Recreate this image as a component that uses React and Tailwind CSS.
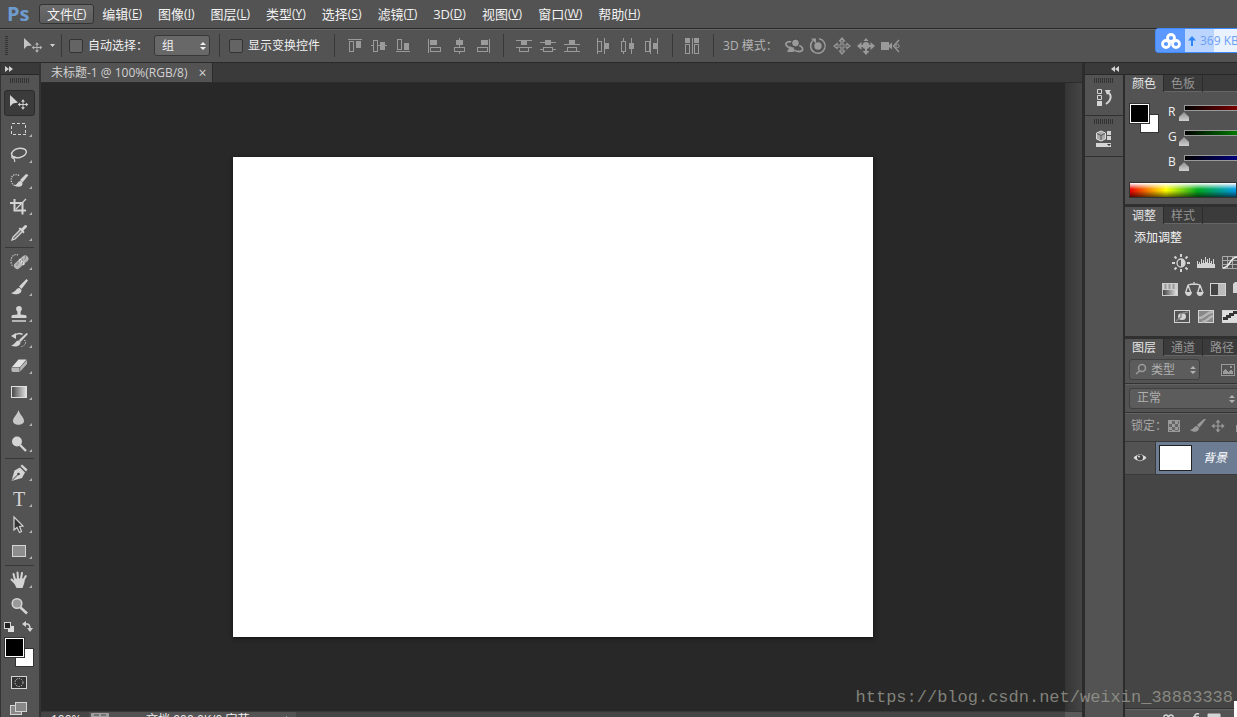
import React, { useState } from 'react';

const MENUS = [
    ['文件', 'F'], ['编辑', 'E'], ['图像', 'I'], ['图层', 'L'], ['类型', 'Y'], ['选择', 'S'],
    ['滤镜', 'T'], ['3D', 'D'], ['视图', 'V'], ['窗口', 'W'], ['帮助', 'H'],
];

const C = '#d4d4d4';
const G = '#9a9a9a';

// Every glyph is drawn on a 24px grid centred on 12,12
function Icon({ children, crisp, className = '' }) {
    return (
        <svg
            viewBox="0 0 24 24"
            className={`w-6 h-6 shrink-0 ${className}`}
            fill="none"
            stroke="none"
            shapeRendering={crisp ? 'crispEdges' : 'auto'}
            aria-hidden="true"
        >
            {children}
        </svg>
    );
}

function MoveCross({ x, y, s = 1, color = C }) {
    return (
        <g transform={`translate(${x} ${y}) scale(${s})`}>
            <path d="M-4 0H4M0 -4V4" stroke={color} strokeWidth="1" />
            <path d="M0 -5.5L2 -3H-2ZM0 5.5L2 3H-2ZM-5.5 0L-3 -2V2ZM5.5 0L3 -2V2Z" fill={color} />
        </g>
    );
}

const brushTip = (
    <>
        <path d="M21 4.500L19.500 3L12 10.500L14.500 13Z" fill={C} />
        <path d="M12.500 12C9 11.500 9.500 16 4 17C8 19.500 14.500 18.500 14.500 14Z" fill={C} />
    </>
);

const TOOLS = [
    { name: '移动工具', plain: true, art: <><path d="M3 4V15.500L6 12.500L11 11.500Z" fill={C} /><MoveCross x={16} y={13.5} s={0.95} /></> },
    { name: '矩形选框工具', crisp: true, art: <path d="M4.500 6.500H18.500V17.500H4.500Z" stroke={C} strokeDasharray="3 2" /> },
    {
        name: '套索工具',
        art: (
            <>
                <ellipse cx="12" cy="10" rx="7.500" ry="4.500" stroke={C} strokeWidth="1.500" transform="rotate(-12 12 10)" />
                <path d="M6 12.500C3.500 13.500 5 16 7 15C9 14 6.500 12.500 6.500 14.500C6.500 16.500 8.500 16 7.500 19" stroke={C} strokeWidth="1.200" />
            </>
        ),
    },
    {
        name: '快速选择工具',
        art: (
            <>
                <path d="M12 6.500C7 3.500 3 8 4.500 13C5.500 16 8 17 9.500 16.500" stroke={C} strokeWidth="1.300" strokeDasharray="1.200 1.200" />
                <path d="M21.500 6L19 5L13 11L15.500 13.500Z" fill={C} />
                <path d="M14 12C10.500 11.500 11 15.500 7 16.500C11 19 16 18 15.500 14Z" fill={C} />
            </>
        ),
    },
    { name: '裁剪工具', art: <><path d="M7.500 4V15.500H19M3 8H15.500V19.500" stroke={C} strokeWidth="2" /><path d="M9 14L19 4" stroke={C} strokeWidth="1.200" /></> },
    {
        name: '吸管工具',
        art: (
            <>
                <path d="M13 9L6 16L5 19L8 18L15 11" stroke={C} strokeWidth="1.300" fill="#777" />
                <path d="M11.500 7.500L13 6.500L14.500 7.500L17.500 4.500C19 3 21 5 19.500 6.500L16.500 9.500L17.500 11L16.500 12.500Z" fill={C} />
            </>
        ),
    },
    'sep',
    {
        name: '污点修复画笔工具',
        art: (
            <>
                <path d="M11 5C7 3.500 3.500 7 4 12C4.300 14 5 15.500 6 16.500" stroke={C} strokeWidth="1.200" strokeDasharray="1.200 1.200" />
                <rect x="5.500" y="9" width="17" height="6.500" rx="3" fill="#b8b8b8" transform="rotate(-42 14 12)" />
                <path d="M11.500 10L16.500 15.500L18 14L13 8.500Z" fill="#dcdcdc" />
                <path d="M13 11h1m1 2h1m-1-3h1M18 7h1M9.500 15h1m0-2h1m6-4h1" stroke="#555" />
            </>
        ),
    },
    { name: '画笔工具', art: brushTip },
    {
        name: '仿制图章工具',
        art: (
            <>
                <path d="M12 4C8.500 4 8.500 8 10.300 9.500L10.500 12.500Q5 12.500 4.500 14V16H19.500V14Q19 12.500 13.500 12.500L13.700 9.500C15.500 8 15.500 4 12 4Z" fill={C} />
                <path d="M5 19H19" stroke={C} strokeWidth="1.500" />
            </>
        ),
    },
    {
        name: '历史记录画笔工具',
        art: (
            <>
                <path d="M21 6L19.500 5L12 12L13.500 14Z" fill={C} />
                <path d="M12 12.500C8.500 12 9 16 4 17.500C8 19.500 13.500 18.500 13.500 14Z" fill={C} />
                <path d="M7 8C10 5 13 5 15.500 6.500" stroke={C} strokeWidth="1.600" />
                <path d="M9 5L4 8L9 11Z" fill={C} />
                <path d="M17.500 12C20 15 17.500 18 14.500 18.500" stroke={C} strokeDasharray="1.300 1.300" />
            </>
        ),
    },
    {
        name: '橡皮擦工具',
        art: (
            <>
                <path d="M11.500 5.500H19.500L13 13H5Z" fill="#e2e2e2" />
                <path d="M4.500 13.500H12.500V18H6Q4 18 4.500 13.500ZM13.200 13.500L20 6V10L13.200 17.500Z" fill="#b5b5b5" />
            </>
        ),
    },
    {
        name: '渐变工具',
        crisp: true,
        art: (
            <>
                <defs><linearGradient id="toolGrad"><stop stopColor="#444" /><stop offset="1" stopColor="#e4e4e4" /></linearGradient></defs>
                <rect x="4.500" y="6.500" width="15" height="11" fill="url(#toolGrad)" stroke="#e0e0e0" />
            </>
        ),
    },
    { name: '模糊工具', art: <path d="M11.500 4C10.500 8.500 6 11 6 15C6 20 17 20 17 15C17 11 12.500 8.500 11.500 4Z" fill="#c8c8c8" /> },
    { name: '减淡工具', art: <><circle cx="10" cy="9.500" r="5" fill={C} /><path d="M13 13L19 19" stroke={C} strokeWidth="2.400" /></> },
    'sep',
    {
        name: '钢笔工具',
        art: (
            <>
                <path d="M15 3.500L20.500 8.500L19 10.500L13.500 5Z" fill={C} />
                <path d="M13 6.500L18 11.500L15 17L4.500 20L7.500 9.500Z" fill={C} />
                <path d="M5 19.500L11 13.500" stroke="#444" />
                <circle cx="11.500" cy="13" r="1.300" fill="#444" />
            </>
        ),
    },
    { name: '横排文字工具', text: 'T' },
    { name: '路径选择工具', art: <path d="M7 4V17L10 14.500L12.500 19.500L14.500 18.500L12.500 13.500L16 13Z" fill="#333" stroke={C} strokeWidth="1.200" /> },
    { name: '矩形工具', crisp: true, art: <rect x="5.500" y="6.500" width="13" height="11" fill="#8d8d8d" stroke={C} /> },
    'sep',
    {
        name: '抓手工具',
        art: (
            <>
                <path d="M8 12L6.500 6M11 11L10.500 4.500M14 11L15 5M16.500 12L18.800 8M9 16L4.500 11.500" stroke={C} strokeWidth="2" strokeLinecap="round" />
                <path d="M7.500 10.500H17.500C18 15 16.500 17 15.500 20H9.500C8.500 17.500 6.500 15.500 7.500 10.500Z" fill={C} />
            </>
        ),
    },
    {
        name: '缩放工具',
        plain: true,
        art: <><circle cx="10" cy="9.500" r="4.800" fill="#999" stroke={C} strokeWidth="1.500" /><path d="M13.500 13.500L20 19.500" stroke={C} strokeWidth="2.500" /></>,
    },
];

// Align / distribute glyphs: an outlined box, a filled box and guide lines
const box = (x, y, w, h) => <rect x={x + 0.5} y={y + 0.5} width={w - 1} height={h - 1} stroke={G} />;
const fill = (x, y, w, h) => <rect x={x} y={y} width={w} height={h} fill={G} />;

const ALIGN_V = [
    ['顶对齐', <>{fill(5, 5, 14, 1)}{box(6, 7, 5, 11)}{fill(13, 7, 5, 7)}</>],
    ['垂直居中对齐', <>{fill(4, 11, 16, 1)}<rect x="6" y="6" width="5" height="12" fill="#535353" />{box(6, 6, 5, 12)}{fill(13, 8, 5, 8)}</>],
    ['底对齐', <>{box(6, 5, 5, 11)}{fill(13, 9, 5, 7)}{fill(5, 17, 14, 1)}</>],
];
const ALIGN_H = [
    ['左对齐', <>{fill(5, 5, 1, 14)}{fill(7, 6, 7, 5)}{box(7, 13, 11, 5)}</>],
    ['水平居中对齐', <>{fill(12, 4, 1, 16)}{fill(9, 6, 7, 5)}<rect x="7" y="13" width="11" height="5" fill="#535353" />{box(7, 13, 11, 5)}</>],
    ['右对齐', <>{fill(18, 5, 1, 14)}{fill(10, 6, 7, 5)}{box(6, 13, 11, 5)}</>],
];
const DIST_V = [
    ['按顶分布', <>{fill(4, 6, 16, 1)}{fill(9, 7, 6, 4)}{fill(4, 13, 16, 1)}{box(7, 13, 10, 5)}</>],
    ['垂直居中分布', <>{fill(4, 8, 16, 1)}{fill(9, 6, 6, 5)}{fill(4, 15, 16, 1)}<rect x="7" y="13" width="10" height="5" fill="#535353" />{box(7, 13, 10, 5)}</>],
    ['按底分布', <>{fill(9, 6, 6, 4)}{fill(4, 10, 16, 1)}{box(7, 13, 10, 5)}{fill(4, 17, 16, 1)}</>],
];
const DIST_H = [
    ['按左分布', <>{fill(5, 4, 1, 16)}{box(5, 7, 5, 11)}{fill(12, 4, 1, 16)}{fill(13, 9, 4, 6)}</>],
    ['水平居中分布', <>{fill(7, 4, 1, 16)}<rect x="5" y="7" width="5" height="11" fill="#535353" />{box(5, 7, 5, 11)}{fill(15, 4, 1, 16)}{fill(13, 9, 5, 6)}</>],
    ['按右分布', <>{box(5, 7, 5, 11)}{fill(10, 4, 1, 16)}{fill(13, 9, 4, 6)}{fill(17, 4, 1, 16)}</>],
];
const AUTO = [
    ['自动对齐图层', <>{fill(5, 4, 5, 5)}{fill(14, 4, 5, 5)}{box(5, 10, 5, 10)}{box(14, 10, 5, 10)}{fill(12, 4, 1, 16)}</>],
];
const MODES_3D = [
    ['旋转 3D 对象', (
        <>
            <path d="M10 8C4 6.500 2 10.500 6 13L12 14.500M16 11C22 13 22 17.500 17 17.500C14 17.500 12 16 9 15.500" stroke={G} strokeWidth="1.800" />
            <circle cx="13.500" cy="9" r="4" fill={G} stroke="#444" />
            <path d="M5 18L8 12L12 18Z" fill={G} />
        </>
    )],
    ['滚动 3D 对象', <><circle cx="12" cy="12" r="3.700" fill={G} /><path d="M7 6.500A7.300 7.300 0 1 0 13 4.700" stroke={G} strokeWidth="1.500" /><path d="M5 4.500H10V9.500Z" fill={G} /></>],
    ['拖动 3D 对象', <path d="M12 4L14.500 7H13V11H17V9.500L20 12L17 14.500V13H13V17H14.500L12 20L9.500 17H11V13H7V14.500L4 12L7 9.500V11H11V7H9.500Z" stroke={G} strokeWidth="1.200" />],
    ['滑动 3D 对象', <><circle cx="12" cy="11.500" r="3.500" fill={G} /><path d="M12 21L8.500 17H15.500ZM3 12L7.500 8V16ZM21 12L16.500 8V16ZM12 4L9.500 7H14.500Z" fill={G} /><path d="M5 12H19M12 12V18" stroke={G} strokeWidth="2" /></>],
    ['缩放 3D 对象', <><path d="M3 8H11V16H3ZM11 11L14 8.500V15.500L11 13Z" fill={G} /><path d="M21 6L15.500 12L21 18" stroke={G} strokeWidth="1.300" /><circle cx="19.500" cy="12" r="1.700" stroke={G} /></>],
];

function OptionGroup({ items, crisp = true }) {
    return (
        <div className="flex">
            {items.map(([label, art]) => (
                <button key={label} type="button" aria-label={label} className="flex">
                    <Icon crisp={crisp}>{art}</Icon>
                </button>
            ))}
        </div>
    );
}

function Divider() {
    return <div className="w-px h-[23px] shrink-0 bg-[#383838]" />;
}

function Grip({ vertical }) {
    return vertical ? (
        <div className="w-[3px] h-5 shrink-0 bg-[repeating-linear-gradient(#333_0_1px,#535353_1px_2px)]" />
    ) : (
        <div className="w-5 h-[5px] shrink-0 bg-[repeating-linear-gradient(90deg,#333_0_1px,#535353_1px_2px)]" />
    );
}

function Arrows({ className = '' }) {
    return (
        <svg viewBox="0 0 6 10" className={`absolute w-1.5 h-2.5 pointer-events-none ${className}`} fill="currentColor" aria-hidden="true">
            <path d="M3 1L6 4H0ZM3 9L6 6H0Z" />
        </svg>
    );
}

function Check({ children }) {
    return (
        <label className="flex items-center gap-[5px] whitespace-nowrap">
            <input type="checkbox" className="appearance-none w-3.5 h-3.5 rounded-[2px] border border-[#333] bg-[#646464] checked:bg-[#aaa]" />
            {children}
        </label>
    );
}

function MenuBar() {
    return (
        <header className="flex items-center h-7 shrink-0 pl-[7px]">
            <span className="w-8 text-xl leading-6 font-bold text-[#6f9ccf]">Ps</span>
            <nav className="flex">
                {MENUS.map(([name, key], i) => (
                    <button
                        key={key}
                        type="button"
                        className={`h-5 px-[7px] flex items-center mb-px text-[13px] leading-4 text-[#f2f2f2] whitespace-nowrap rounded-[3px] border ${
                            i === 0 ? 'border-[#333] bg-linear-to-b from-[#6c6c6c] to-[#5c5c5c]' : 'border-transparent'
                        }`}
                    >
                        {name}
                        <span className="text-xs">(<u>{key}</u>)</span>
                    </button>
                ))}
            </nav>
        </header>
    );
}

function OptionsBar() {
    return (
        <div className="flex items-center h-[35px] shrink-0 pl-[5px] border-y border-[#2a2a2a] shadow-[inset_0_1px_0_#666] text-xs text-[#f0f0f0]">
            <Grip vertical />
            <button type="button" aria-label="移动工具预设" className="flex items-center ml-3 mr-1.5">
                <Icon>
                    <path d="M4 4V15L7 12L12 11.500Z" fill="#c4c4c4" />
                    <MoveCross x={17} y={13.5} s={0.95} color="#b8b8b8" />
                </Icon>
                <svg viewBox="0 0 5 3" className="w-[5px] h-[3px] ml-1.5" fill={C} aria-hidden="true"><path d="M0 0H5L2.500 3Z" /></svg>
            </button>
            <Divider />
            <div className="flex items-center pl-[7px] pr-[9px] gap-2">
                <Check><span className="w-[58px]">自动选择：</span></Check>
                <div className="relative">
                    <select aria-label="自动选择" className="appearance-none w-14 h-[21px] pl-[7px] text-xs rounded-[3px] border border-[#383838] bg-[#686868]">
                        <option>组</option>
                        <option>图层</option>
                    </select>
                    <Arrows className="right-1 top-1.5" />
                </div>
            </div>
            <Divider />
            <div className="pl-[9px] pr-3.5"><Check>显示变换控件</Check></div>
            <Divider />
            <div className="flex gap-2 px-2">
                <OptionGroup items={ALIGN_V} />
                <OptionGroup items={ALIGN_H} />
            </div>
            <Divider />
            <div className="flex gap-2 px-2">
                <OptionGroup items={DIST_V} />
                <OptionGroup items={DIST_H} />
            </div>
            <Divider />
            <div className="pl-[7px] pr-[9px]"><OptionGroup items={AUTO} /></div>
            <Divider />
            <span className="pl-[9px] w-[68px] whitespace-nowrap text-[#b4b4b4]">3D 模式：</span>
            <OptionGroup items={MODES_3D} crisp={false} />
        </div>
    );
}

function Toolbar() {
    const [active, setActive] = useState('移动工具');
    return (
        <aside className="w-[41px] shrink-0 flex flex-col border-l border-r-2 border-[#333] bg-[#535353]">
            <div className="h-3 shrink-0 pl-1 flex items-center bg-[#3a3a3a] border-b border-[#282828]">
                <svg viewBox="0 0 8 6" className="w-2 h-1.5" fill={C} aria-hidden="true"><path d="M0 0L4 3L0 6ZM4 0L8 3L4 6Z" /></svg>
            </div>
            <div className="flex justify-center pt-[3px] pb-[7px]"><Grip /></div>
            <div className="flex flex-col items-center pr-0.5">
                {TOOLS.map((tool, i) => tool === 'sep' ? (
                    <div key={i} className="w-[29px] h-px my-px shrink-0 bg-[#383838]" />
                ) : (
                    <button
                        key={tool.name}
                        type="button"
                        aria-label={tool.name}
                        onClick={() => setActive(tool.name)}
                        className={`relative w-[31px] h-[26px] shrink-0 flex items-center justify-center rounded-[3px] border ${
                            active === tool.name ? 'border-[#2c2c2c] bg-[#3b3b3b]' : 'border-transparent'
                        }`}
                    >
                        {tool.text
                            ? <span className="font-['Liberation_Serif',serif] text-xl leading-6 text-[#d4d4d4]">{tool.text}</span>
                            : <Icon crisp={tool.crisp}>{tool.art}</Icon>}
                        {!tool.plain && (
                            <svg viewBox="0 0 3 3" className="absolute right-0.5 bottom-1 w-[3px] h-[3px]" fill="#b4b4b4" aria-hidden="true"><path d="M3 0V3H0Z" /></svg>
                        )}
                    </button>
                ))}
            </div>
            <div className="flex justify-between pl-[3px] pr-1.5 pt-0.5">
                <button type="button" aria-label="默认前景色和背景色">
                    <svg viewBox="0 0 10 10" className="w-2.5 h-2.5" shapeRendering="crispEdges" aria-hidden="true">
                        <path d="M4 4H10V10H4Z" fill="#ddd" /><path d="M.5.5H6.500V6.500H.5Z" fill="#222" stroke={C} />
                    </svg>
                </button>
                <button type="button" aria-label="切换前景色和背景色">
                    <svg viewBox="0 0 11 11" className="w-[11px] h-[11px]" fill="none" aria-hidden="true">
                        <path d="M3 3H5Q8 3 8 8" stroke={C} strokeWidth="1.500" /><path d="M0 3L4 0V6ZM8 11L5 7H11Z" fill={C} />
                    </svg>
                </button>
            </div>
            <div className="flex pl-1 pt-1.5">
                <Swatches />
            </div>
            <button type="button" aria-label="以快速蒙版模式编辑" className="self-center mr-0.5 mt-1 shrink-0">
                <Icon>
                    <rect x="4.500" y="5.500" width="15" height="12" fill="#333" stroke={C} />
                    <circle cx="12" cy="11.500" r="4" stroke={C} strokeDasharray="1.300 1.300" />
                </Icon>
            </button>
            <button type="button" aria-label="更改屏幕模式" className="self-center mr-0.5 mt-0.5 shrink-0">
                <Icon crisp>
                    <rect x="3.500" y="8.500" width="11" height="9" fill="#888" stroke={C} />
                    <rect x="8.500" y="5.500" width="11" height="9" fill="#888" stroke={C} />
                </Icon>
            </button>
        </aside>
    );
}

function Swatches() {
    return (
        <div className="grid grid-cols-[10px_9px_10px] grid-rows-[10px_9px_10px] w-[29px] shrink-0">
            <button type="button" aria-label="背景色" className="col-start-2 col-span-2 row-start-2 row-span-2 bg-white border border-[#333]" />
            <button type="button" aria-label="前景色" className="col-start-1 col-span-2 row-start-1 row-span-2 bg-black border border-white outline outline-[#333]" />
        </div>
    );
}

function Workspace() {
    return (
        <main className="flex-1 min-w-0 flex flex-col bg-[#282828]">
            <div className="h-5 shrink-0 flex bg-[#3a3a3a] border-b border-[#2c2c2c]">
                <div className="flex items-center pl-2.5 pr-1.5 gap-[11px] text-xs text-[#d2d2d2] bg-[#535353] border-r border-[#2c2c2c] whitespace-nowrap">
                    <span>未标题-1 @ 100%(RGB/8)</span>
                    <button type="button" aria-label="关闭" className="text-sm leading-4">×</button>
                </div>
            </div>
            <div className="flex-1 min-h-0 flex">
                <div className="flex-1 flex items-center justify-center">
                    <div className="w-[640px] h-[480px] shrink-0 bg-white shadow-[0_1px_4px_#111]" />
                </div>
                <div className="w-[17px] shrink-0 bg-linear-to-r from-[#353535] to-[#454545]" />
            </div>
            {/* sits half below the window edge */}
            <footer className="h-[18px] -mb-3 shrink-0 flex bg-[#454545] border-t border-[#383838] text-xs leading-4 text-[#f0f0f0] whitespace-nowrap">
                <span className="w-12 pl-2.5">100%</span>
                <div className="w-[207px] flex pl-0.5 pr-1 bg-[#535353]">
                    <svg viewBox="0 0 18 12" className="w-[18px] h-3 mt-px" aria-hidden="true"><rect width="18" height="12" rx="1" fill="#a0a0a0" /><path d="M3 2H8M10 2H15" stroke="#444" /></svg>
                    <span className="flex-1 pl-[37px]">文档:900.0K/0 字节</span>
                    <svg viewBox="0 0 6 10" className="w-1.5 h-2.5 mt-1" fill={C} aria-hidden="true"><path d="M0 0L6 5L0 10Z" /></svg>
                </div>
                <span className="flex-1" />
                <span className="w-[17px] bg-[#5a5a5a]" />
            </footer>
        </main>
    );
}

function Dock() {
    return (
        <div className="w-10 shrink-0 flex flex-col border-r-2 border-[#2c2c2c]">
            <div className="h-[41px] flex flex-col items-center pt-[3px] border-b border-[#303030]">
                <Grip />
                <button type="button" aria-label="历史记录" className="mt-[3px]">
                    <Icon className="ml-0.5">
                        <path d="M4.500 3.500H8.500V7.500H4.500ZM4.500 9.500H8.500V13.500H4.500Z" stroke={C} />
                        <path d="M4 15H9V20H4ZM12 4H18L14 9Z" fill={C} />
                        <path d="M14 6C19 8 19 14 13 18" stroke={C} strokeWidth="2" />
                    </Icon>
                </button>
            </div>
            <div className="h-[41px] flex flex-col items-center pt-[3px] border-b border-[#303030]">
                <Grip />
                <button type="button" aria-label="属性" className="mt-[3px]">
                    <Icon className="ml-0.5">
                        <path d="M8 4L12.500 6V12L8 14L3.500 12V6Z" fill="#aaa" stroke="#ddd" />
                        <path d="M4 6.500L8 8.500L12 6.500M8 8.500V13" stroke="#555" />
                        <path d="M14 4H18V8H14ZM14 9H18V13H14ZM3 16H18V20H3Z" fill={C} />
                        <path d="M14 17H18L16 19Z" fill="#333" />
                    </Icon>
                </button>
            </div>
        </div>
    );
}

function Tabs({ names }) {
    return (
        <div role="tablist" className="h-[17px] shrink-0 flex bg-[#3b3b3b] text-xs leading-4 whitespace-nowrap">
            {names.map((name, i) => (
                <button
                    key={name}
                    type="button"
                    role="tab"
                    aria-selected={i === 0}
                    className={`shrink-0 w-[39px] border-r border-[#2c2c2c] ${
                        i === 0 ? 'bg-[#535353] text-[#e6e6e6]' : 'text-[#949494] shadow-[inset_0_-1px_0_#666]'
                    }`}
                >
                    {name}
                </button>
            ))}
            <span className="flex-1 shadow-[inset_0_-1px_0_#666]" />
        </div>
    );
}

const CHANNELS = [
    ['R', 'bg-[linear-gradient(90deg,#000,#f00)]'],
    ['G', 'bg-[linear-gradient(90deg,#000,#0f0)]'],
    ['B', 'bg-[linear-gradient(90deg,#000,#00f)]'],
];

function ColorPanel() {
    return (
        <section className="h-[132px] shrink-0 flex flex-col border-b-3 border-[#303030] overflow-hidden">
            <Tabs names={['颜色', '色板']} />
            <div className="flex pl-[5px] pt-3">
                <Swatches />
                <div className="pl-[9px]">
                    {CHANNELS.map(([name, track]) => (
                        <label key={name} className="flex h-[25px] text-xs leading-4 text-[#f0f0f0]">
                            <span className="w-4">{name}</span>
                            <span className="w-[110px] pt-px">
                                <span className={`block h-1.5 border border-[#999] ${track}`} />
                                <input
                                    type="range"
                                    min="0"
                                    max="255"
                                    defaultValue="0"
                                    aria-label={name}
                                    className="block appearance-none w-[120px] h-2.5 -ml-[5px] bg-transparent [&::-webkit-slider-thumb]:appearance-none [&::-webkit-slider-thumb]:w-2.5 [&::-webkit-slider-thumb]:h-2.5 [&::-webkit-slider-thumb]:bg-linear-to-b [&::-webkit-slider-thumb]:from-[#888] [&::-webkit-slider-thumb]:to-[#d0d0d0] [&::-webkit-slider-thumb]:[clip-path:polygon(50%_10%,100%_60%,100%_100%,0_100%,0_60%)]"
                                />
                            </span>
                        </label>
                    ))}
                </div>
            </div>
            <div className="h-4 ml-1 mt-[3px] shrink-0 border border-[#333] bg-[linear-gradient(#fff_0%,transparent_45%,transparent_55%,#0009_100%),linear-gradient(90deg,#e00_0,#ff0_36px,#0a2_68px,#09f_110px)]" />
        </section>
    );
}

const ADJUSTMENTS = [
    [
        ['亮度/对比度', <><circle cx="12" cy="12" r="4" stroke={C} strokeWidth="1.300" /><path d="M12 8A4 4 0 0 1 12 16Z" fill={C} /><path d="M12 3V6M12 18V21M3 12H6M18 12H21M5.500 5.500L7.500 7.500M16.500 16.500L18.500 18.500M18.500 5.500L16.500 7.500M7.500 16.500L5.500 18.500" stroke={C} strokeWidth="2" /></>],
        ['色阶', <path d="M4 17V10H5V13H6V11H7V13H8V8H9V12H10V9H11V12H12V6H13V11H14V8H15V12H16V7H17V12H18V10H19V13H20V8H21V13H22V17Z" fill={C} />],
        ['曲线', <><path d="M5.500 5.500H20.500V17.500H5.500ZM10.500 6V17M15.500 6V17M6 9.500H20M6 13.500H20" stroke="#aaa" /><path d="M6 17C14 16 12 7 20 6" stroke="#eee" strokeWidth="1.500" /></>],
    ],
    [
        ['色相/饱和度', <><rect x="4" y="5" width="16" height="13" fill="#ccc" /><path d="M7.500 6V11M11.500 6V11M15.500 6V11" stroke="#999" strokeWidth="2" /><path d="M5 12H19V17H5Z" fill="url(#toolGrad)" /></>],
        ['色彩平衡', <><path d="M12 4V7M6 7Q12 5 18 7M6 7L3.500 15M6 7L9 15M18 7L15.500 15M18 7L21 15" stroke={C} strokeWidth="1.300" /><path d="M3 14H10Q9.500 18 6.500 18Q3.500 18 3 14ZM14.500 14H21.500Q21 18 18 18Q15 18 14.500 14Z" fill={C} /></>],
        ['黑白', <><rect x="4.500" y="5.500" width="15" height="12" fill="#444" stroke={C} /><path d="M12 6H19V17H12Z" fill="#bbb" /></>],
        ['照片滤镜', <path d="M3 6L5 4H10V6H21V15H3Z" fill={C} />],
    ],
    [
        ['反相', <><rect x="4.500" y="5.500" width="15" height="12" fill="#555" stroke={C} /><ellipse cx="12" cy="11.500" rx="4" ry="3.500" fill={C} /><path d="M6 16L11 12V8.500L18 7" stroke="#888" strokeWidth="1.500" /></>],
        ['色调分离', <><rect x="4.500" y="5.500" width="15" height="12" fill="#888" stroke={C} /><path d="M5 13C11 13 12 7 19 7M8 17C14 17 14 12 19 11" stroke="#b4b4b4" strokeWidth="2.500" /></>],
        ['阈值', <><rect x="4.500" y="5.500" width="15" height="12" fill="#ddd" stroke={C} /><path d="M5 12H8V10H11V8H15V6H19V9H16V11H13V13H10V15H5Z" fill="#333" /></>],
    ],
];
const ADJ_INDENT = ['pl-11', 'pl-[33px]', 'pl-[45px]'];

function AdjustPanel() {
    return (
        <section className="h-[132px] shrink-0 flex flex-col border-b-3 border-[#303030] overflow-hidden">
            <Tabs names={['调整', '样式']} />
            <h2 className="pl-[9px] pt-1.5 pb-[5px] text-xs leading-4 text-[#f5f5f5]">添加调整</h2>
            {ADJUSTMENTS.map((row, i) => (
                <div key={i} className={`flex h-[27px] ${ADJ_INDENT[i]}`}>
                    {row.map(([label, art]) => (
                        <button key={label} type="button" aria-label={label} className="flex h-6"><Icon>{art}</Icon></button>
                    ))}
                </div>
            ))}
        </section>
    );
}

function LayersPanel() {
    return (
        <section className="flex-1 min-h-0 flex flex-col text-xs text-[#b0b0b0] overflow-hidden">
            <Tabs names={['图层', '通道', '路径']} />
            <div className="h-7 shrink-0 flex items-center pl-1 border-b border-[#333]">
                <div className="relative shrink-0">
                    <select aria-label="图层过滤" className="appearance-none w-[71px] h-[21px] pl-[21px] rounded-[3px] border border-[#404040] bg-[#5c5c5c]">
                        <option>类型</option>
                    </select>
                    <svg viewBox="0 0 12 12" className="absolute left-1.5 top-1 w-3 h-3 pointer-events-none" fill="none" stroke={G} strokeWidth="1.600" aria-hidden="true">
                        <circle cx="7" cy="5" r="3.500" /><path d="M4.500 8L1 11" />
                    </svg>
                    <Arrows className="right-1 top-1.5" />
                </div>
                <button type="button" aria-label="像素图层滤镜" className="flex ml-4">
                    <Icon crisp><rect x="5.500" y="6.500" width="13" height="11" stroke={G} /><path d="M7 16V13L10 11L12 14L15 12L17 14V16ZM14 8H16V10H14Z" fill={G} /></Icon>
                </button>
            </div>
            <div className="h-[29px] shrink-0 flex items-center pl-1 border-b border-[#333] shadow-[inset_0_1px_0_#626262]">
                <div className="relative shrink-0">
                    <select aria-label="混合模式" className="appearance-none w-[112px] h-[21px] pl-[7px] rounded-[3px] border border-[#404040] bg-[#5c5c5c]">
                        <option>正常</option>
                    </select>
                    <Arrows className="right-1.5 top-1.5" />
                </div>
            </div>
            <div className="h-7 shrink-0 flex items-center pl-1.5 pb-0.5 shadow-[inset_0_1px_0_#626262] text-[#a8a8a8]">
                <span className="w-[31px] whitespace-nowrap">锁定：</span>
                <button type="button" aria-label="锁定透明像素" className="flex">
                    <Icon crisp><rect x="6" y="6" width="12" height="12" fill={G} /><path d="M10 7h3v3h-3zM7 10h3v3h-3zM13 10h3v3h-3zM10 13h3v3h-3zM16 7h1v3h-1zM16 13h1v3h-1zM7 16h3v1h-3zM13 16h3v1h-3z" fill="#666" /></Icon>
                </button>
                <button type="button" aria-label="锁定图像像素" className="flex -mr-1">
                    <Icon><path d="M20 5L18 5L11 11L13.500 13.500Z" fill={G} /><path d="M11 12C8 12 8 15 4 16C8 19 13 18 13 14Z" fill={G} /></Icon>
                </button>
                <button type="button" aria-label="锁定位置" className="flex"><Icon><MoveCross x={12} y={12} s={1.2} color={G} /></Icon></button>
                <button type="button" aria-label="锁定全部" className="flex"><Icon><path d="M6 11H16V18H6Z" fill={G} /></Icon></button>
            </div>
            <div className="h-[34px] shrink-0 flex border-y border-[#3a3a3a]">
                <button type="button" aria-label="指示图层可见性" className="w-[31px] shrink-0 flex items-center justify-center border-r border-[#3a3a3a]">
                    <Icon>
                        <path d="M5.500 12Q12 4.500 18.500 12Q12 18.500 5.500 12Z" fill="#ddd" />
                        <circle cx="12" cy="11.500" r="3" fill="#444" /><circle cx="11" cy="10.500" r="1" fill="#ddd" />
                    </Icon>
                </button>
                <div className="flex-1 flex items-center pl-[3px] gap-[11px] bg-[#6b7c93] whitespace-nowrap">
                    <div className="w-[33px] h-[26px] shrink-0 bg-white border border-[#222]" />
                    <span className="italic text-white">背景</span>
                </div>
            </div>
            <div className="flex-1 bg-[#454545]" />
            <div className="h-[9px] shrink-0 flex justify-end pr-4 border-t border-[#303030] shadow-[inset_0_1px_0_#666] overflow-hidden">
                <svg viewBox="0 0 58 6" className="w-[58px] h-1.5 mt-1" fill="none" stroke={C} aria-hidden="true">
                    <path d="M1 6V3Q3 1 5 3V6M6 6V3Q8 1 10 3V6M32 6V2Q34 0 36 1M30 4H36" strokeWidth="1.500" /><path d="M45 1H57V6H45Z" fill={C} />
                </svg>
            </div>
        </section>
    );
}

function UploadBadge() {
    return (
        <div className="absolute right-0 top-7 w-[82px] h-[25px] flex overflow-hidden rounded-l border border-r-0 border-[#3d8bff] bg-linear-to-r from-[#bcd5ff] from-[58px] to-[#eaf2ff] to-[58px] text-xs text-[#6d9ff5] whitespace-nowrap">
            <div className="w-[29px] shrink-0 flex items-center justify-center bg-[#5b98ff]">
                <svg viewBox="0 0 20 16" className="w-5 h-4" fill="none" stroke="#fff" strokeWidth="2.800" aria-hidden="true">
                    <circle cx="10" cy="5" r="3.500" /><circle cx="5" cy="11" r="3.500" /><circle cx="15" cy="11" r="3.500" />
                </svg>
            </div>
            <div className="flex items-center pl-[3px] gap-1">
                <svg viewBox="0 0 8 10" className="w-2 h-2.5 shrink-0" fill="#2f86f6" aria-hidden="true"><path d="M4 0L8 4.500H5V10H3V4.500H0Z" /></svg>
                <span>369 KB/s</span>
            </div>
        </div>
    );
}

export default function App() {
    return (
        <div className="relative h-screen flex flex-col overflow-hidden select-none bg-[#535353] font-['Open_Sans','Noto_Sans_CJK_SC',sans-serif]">
            <MenuBar />
            <OptionsBar />
            <div className="flex-1 min-h-0 flex">
                <Toolbar />
                <Workspace />
                <div className="w-[155px] shrink-0 flex flex-col border-l-3 border-[#2c2c2c]">
                    <div className="h-3 shrink-0 flex items-center pl-[26px] bg-[#3a3a3a] border-b border-[#282828]">
                        <svg viewBox="0 0 8 6" className="w-2 h-1.5" fill={C} aria-hidden="true"><path d="M4 0L0 3L4 6ZM8 0L4 3L8 6Z" /></svg>
                    </div>
                    <div className="flex-1 min-h-0 flex">
                        <Dock />
                        <div className="flex-1 min-w-0 flex flex-col">
                            <ColorPanel />
                            <AdjustPanel />
                            <LayersPanel />
                        </div>
                    </div>
                </div>
            </div>
            <UploadBadge />
            <div className="absolute right-0 bottom-0 w-[3px] h-4 bg-white" />
            <span className="absolute right-1 bottom-[7px] font-['Liberation_Mono',monospace] text-[17px] leading-6 text-[#a0a096]/75 pointer-events-none">
                https://blog.csdn.net/weixin_38883338
            </span>
        </div>
    );
}
